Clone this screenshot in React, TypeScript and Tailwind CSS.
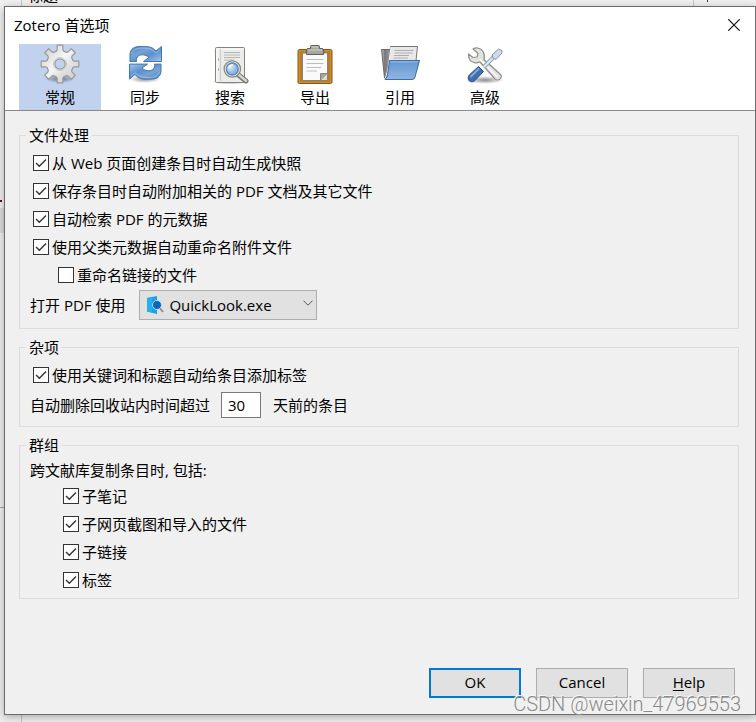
import type { ReactNode } from "react";
import { useState } from "react";

const gearPath = (() => {
  const points: string[] = [];
  const c = 20;
  for (let i = 0; i < 8; i++) {
    const base = (i * Math.PI) / 4;
    const corners: [number, number][] = [
      [-0.27, 13.4],
      [-0.2, 14.6],
      [-0.15, 19],
      [0.15, 19],
      [0.2, 14.6],
      [0.27, 13.4],
    ];
    for (const [a, r] of corners) {
      points.push(`${(c + r * Math.sin(base + a)).toFixed(2)},${(c - r * Math.cos(base + a)).toFixed(2)}`);
    }
  }
  return `M${points.join("L")}Z M25.2 20A5.2 5.2 0 1 0 14.8 20A5.2 5.2 0 1 0 25.2 20Z`;
})();

function Shadow({ cy = 36, rx = 16 }: { cy?: number; rx?: number }) {
  return (
    <>
      <radialGradient id={`shade${cy}${rx}`}>
        <stop offset="0" stopColor="#000" stopOpacity="0.45" />
        <stop offset="1" stopColor="#000" stopOpacity="0" />
      </radialGradient>
      <ellipse cx="20" cy={cy} rx={rx} ry="4" fill={`url(#shade${cy}${rx})`} />
    </>
  );
}

function GearIcon() {
  return (
    <svg viewBox="0 0 40 40" className="size-10" aria-hidden="true">
      <defs>
        <linearGradient id="gear" x1="0" y1="0" x2="1" y2="1">
          <stop offset="0.1" stopColor="#d2d2d2" />
          <stop offset="0.45" stopColor="#f6f6f6" />
          <stop offset="0.65" stopColor="#e0e0e0" />
          <stop offset="1" stopColor="#c8c8c8" />
        </linearGradient>
      </defs>
      <Shadow cy={35} rx={15} />
      <path d={gearPath} fill="url(#gear)" fillRule="evenodd" stroke="#999996" strokeWidth="1.2" strokeLinejoin="round" />
      <circle cx="20" cy="20" r="6.4" fill="none" stroke="#c4c4c4" strokeWidth="1" />
    </svg>
  );
}

function SyncIcon() {
  const arrow = "M5 17.5V10C5.5 5 9 2.5 15 2.5H21C26 2.8 29 4.5 31 7L36.5 2.5V17.5H18.5L24 13.5C21 10.5 16 10 13.5 12C11.5 13.5 11 15 11.5 17.5Z";
  return (
    <svg viewBox="0 0 40 40" className="size-10" aria-hidden="true">
      <defs>
        <linearGradient id="sync" x1="0" y1="0" x2="1" y2="1">
          <stop offset="0" stopColor="#4a80c0" />
          <stop offset="0.35" stopColor="#76a3d7" />
          <stop offset="0.6" stopColor="#5a90cd" />
          <stop offset="1" stopColor="#a5c6eb" />
        </linearGradient>
      </defs>
      <Shadow cy={35} />
      <path d={arrow} fill="url(#sync)" stroke="#4576ae" strokeLinejoin="round" />
      <path d="M6.5 10C8 5 12 4 19 4C24 4 28 6 31 9L35 5.5" fill="none" stroke="#a3c3e6" strokeWidth="0.8" />
      <g transform="rotate(180 20.5 18.8)">
        <path d={arrow} fill="url(#sync)" stroke="#4576ae" strokeLinejoin="round" />
        <path d="M6.5 10C8 5 12 4 19 4C24 4 28 6 31 9L35 5.5" fill="none" stroke="#a3c3e6" strokeWidth="0.8" />
      </g>
    </svg>
  );
}

function SearchIcon() {
  return (
    <svg viewBox="0 0 40 40" className="size-10" aria-hidden="true">
      <defs>
        <radialGradient id="lens" cx="0.35" cy="0.35">
          <stop offset="0" stopColor="#e4effa" />
          <stop offset="1" stopColor="#8eb4dd" />
        </radialGradient>
      </defs>
      <Shadow cy={37} rx={18} />
      <rect x="5.5" y="3.5" width="29" height="35" rx="1" fill="#ececea" stroke="#83837f" />
      <path d="M7 37.5V5H33.5" fill="none" stroke="#fff" />
      <path d="M10.5 5V37" stroke="#c9c9c7" />
      <path d="M14 8.5H30M14 11H30M14 13.5H30M14 16H24" stroke="#b4b4b1" />
      <path d="M8.5 14.5V16.5M8.5 24.5V26.5" stroke="#999" />
      <path d="M28.5 31L36 37" stroke="#777773" strokeWidth="5" strokeLinecap="round" />
      <path d="M29 31L36 36.8" stroke="#d4d4d0" strokeWidth="2.5" strokeLinecap="round" />
      <circle cx="22.3" cy="25" r="8.2" fill="#f0f0ee" stroke="#888884" strokeWidth="1.3" />
      <circle cx="22.3" cy="25" r="6" fill="url(#lens)" stroke="#5386bd" strokeWidth="1.3" />
      <path d="M18.5 24.5A4 4 0 0 1 23 21" fill="none" stroke="#fff" strokeWidth="1.2" />
    </svg>
  );
}

function ClipboardIcon() {
  return (
    <svg viewBox="0 0 40 40" className="size-10" aria-hidden="true">
      <Shadow cy={38} rx={20} />
      <rect x="3" y="5.5" width="34" height="34" rx="1.5" fill="#bd7b21" stroke="#855313" />
      <rect x="4.2" y="6.7" width="31.6" height="31.6" fill="none" stroke="#d69a42" strokeWidth="0.8" />
      <path d="M7.5 9H32.5V36.5H7.5Z" fill="#fafafa" stroke="#87847c" />
      <path d="M25.5 36V29.5H32V30L26 36Z" fill="#a5a59f" stroke="#85857f" />
      <path d="M26 36L32 30V36Z" fill="#dededa" />
      <path d="M11.5 15.5H28.5M11.5 19.5H28.5M11.5 23.5H26M11.5 27H22" stroke="#bdbdbd" strokeWidth="1.2" />
      <path d="M11.5 10.5V6Q11.5 4.5 13 4.5H15.5V2.5Q15.5 1.5 16.5 1.5H23.5Q24.5 1.5 24.5 2.5V4.5H27Q28.5 4.5 28.5 6V10.5Z" fill="#a5a89f" stroke="#5e6158" />
      <path d="M13 6H27M17 3H23" stroke="#d0d2c9" />
    </svg>
  );
}

function FolderIcon() {
  return (
    <svg viewBox="0 0 40 40" className="size-10" aria-hidden="true">
      <defs>
        <linearGradient id="folder" x1="0" y1="0" x2="0" y2="1">
          <stop offset="0" stopColor="#6397d2" />
          <stop offset="1" stopColor="#8fb5e2" />
        </linearGradient>
        <linearGradient id="back" x1="0" y1="0" x2="1" y2="0">
          <stop offset="0" stopColor="#d0d0d0" />
          <stop offset="0.3" stopColor="#777" />
          <stop offset="1" stopColor="#aaa" />
        </linearGradient>
      </defs>
      <path d="M1.5 5.5H10L12 8V34H4.5Z" fill="url(#back)" stroke="#686868" />
      <path d="M10.5 2.5H37.5L35 26H8Z" fill="#e8e8e8" stroke="#777" />
      <path d="M14.5 6.5H33.5M14.5 9H32.5M14 11.5H29M13.5 14H28" stroke="#acacac" />
      <path d="M11 3L8 25L5.5 34" fill="none" stroke="#fff" />
      <path d="M9.5 16.5H39.5L35 33Q34.5 35.5 32 35.5H5Q7.5 33 7.7 30Z" fill="url(#folder)" stroke="#3b6ca8" strokeLinejoin="round" />
      <path d="M10.5 17.8H37.8" stroke="#a0c1e6" />
    </svg>
  );
}

function ToolsIcon() {
  return (
    <svg viewBox="0 0 40 40" className="size-10" aria-hidden="true">
      <Shadow cy={36} rx={19} />
      <path d="M8 5L13 9.5L12 13L8 13.5L3.5 10C3 14.5 5.5 18.5 10 18.8C12 19 13.5 18.5 15 18L29.5 34.5C31 36.5 34 36.5 35.5 34.5C36.5 33 36.3 31 35 30L19 15.5C20.5 9 17 4.5 12.5 4Q10 3.8 8 5Z" fill="#e2e2e0" stroke="#8d8d89" strokeWidth="1.2" strokeLinejoin="round" />
      <path d="M15 15.5L32.5 33" stroke="#fafafa" strokeWidth="1.5" />
      <path d="M19 23L29 12.5" stroke="#8aa4bd" strokeWidth="4" />
      <path d="M19 23L29 12.5" stroke="#dce8f3" strokeWidth="2" />
      <path d="M27 11L33.5 5L37 6.5V9L31 15.5L28 14Z" fill="#cddae8" stroke="#8097ad" />
      <path d="M13.5 22.5L18.5 27.5L10 36.5C8 38.5 5 38 4 36.5C2.8 35 3 32 4.5 30.8Z" fill="#3f6fae" stroke="#24508b" strokeLinejoin="round" />
      <path d="M13.5 25L6 32.5" stroke="#86abdc" strokeWidth="1.8" strokeLinecap="round" />
    </svg>
  );
}

function QuickLookIcon() {
  return (
    <svg viewBox="0 0 18 20" className="pointer-events-none absolute top-[5px] left-2 h-5 w-[18px]" aria-hidden="true">
      <path d="M0 3L10 1V6L6 9V13L10 15V19L0 16.5Z" fill="#1ea0e6" />
      <path d="M0 3L5 2V17.7L0 16.5Z" fill="#27b0f0" />
      <path d="M11.5 11.5L16 17" stroke="#8b8b8b" strokeWidth="1.8" />
      <circle cx="10" cy="10" r="4.5" fill="#0b66bd" stroke="#d7eafa" strokeWidth="0.8" />
    </svg>
  );
}

const tabs: { name: string; icon: ReactNode }[] = [
  { name: "常规", icon: <GearIcon /> },
  { name: "同步", icon: <SyncIcon /> },
  { name: "搜索", icon: <SearchIcon /> },
  { name: "导出", icon: <ClipboardIcon /> },
  { name: "引用", icon: <FolderIcon /> },
  { name: "高级", icon: <ToolsIcon /> },
];

function Check({ label, checked = true }: { label: string; checked?: boolean }) {
  return (
    <label className="flex h-7 items-center gap-[3px]">
      <span className="grid size-4 shrink-0">
        <input
          type="checkbox"
          defaultChecked={checked}
          className="peer col-start-1 row-start-1 size-4 appearance-none border border-[#333] bg-white"
        />
        <svg
          viewBox="0 0 16 16"
          className="pointer-events-none invisible col-start-1 row-start-1 size-4 peer-checked:visible"
          aria-hidden="true"
        >
          <path d="M3 8L6.3 11.3L13 4.5" fill="none" stroke="#333" strokeWidth="1.4" />
        </svg>
      </span>
      <span>{label}</span>
    </label>
  );
}

function Group({ title, children }: { title: string; children: ReactNode }) {
  return (
    <fieldset className="min-w-0 border border-[#dcdcdc] px-2.5">
      <legend className="-ml-1 h-[22px] px-[3px] leading-[22px]">{title}</legend>
      {children}
    </fieldset>
  );
}

export default function App() {
  const [tab, setTab] = useState("常规");
  const button = "h-[30px] w-[92px] bg-[#e1e1e1] pb-0.5";

  return (
    <div className="relative flex min-h-screen flex-col overflow-hidden bg-[#f0f0f0] pt-1.5 pb-[7px] pl-1 font-['Open_Sans','Noto_Sans_CJK_SC',sans-serif] text-[15px] leading-5 text-black">
      <div className="absolute inset-y-0 left-[21px] w-px bg-[#c4c4c4]" />
      <div className="absolute top-0 left-[693px] h-2 w-px bg-[#c4c4c4]" />
      <div className="absolute -top-[15px] left-7">标题</div>
      <div className="absolute top-0 left-[707px] h-0.5 w-px bg-[#333]" />
      <div className="absolute top-[200px] left-0 h-0.5 w-0.5 bg-[#5a1515]" />
      <div className="absolute top-[208px] left-0 h-[25px] w-1 bg-[#dcdcdc]" />
      <div className="absolute top-[507px] left-0 h-px w-1 bg-[#aaa]" />

      <main className="relative flex flex-1 flex-col border border-[#6b6b6b] bg-[#f0f0f0] shadow-[0_2px_8px_rgba(0,0,0,0.3)]">
        <header className="border-b border-[#8a8a8a] bg-white">
          <div className="flex h-[37px] items-center justify-between pr-[13px] pb-0.5 pl-[9px]">
            <h1>Zotero 首选项</h1>
            <button type="button" aria-label="Close" className="grid size-4 place-items-center">
              <svg viewBox="0 0 12 12" className="size-3" aria-hidden="true">
                <path d="M0.3 0.3L11.7 11.7M11.7 0.3L0.3 11.7" stroke="#111" strokeWidth="1.2" />
              </svg>
            </button>
          </div>
          <nav className="flex gap-[3px] pl-3.5">
            {tabs.map((item) => (
              <button
                key={item.name}
                type="button"
                onClick={() => setTab(item.name)}
                className={
                  item.name === tab
                    ? "flex h-[66px] w-[82px] flex-col items-center gap-[3px] bg-[#c1d2ee]"
                    : "flex h-[66px] w-[82px] flex-col items-center gap-[3px]"
                }
              >
                {item.icon}
                <span>{item.name}</span>
              </button>
            ))}
          </nav>
        </header>

        <div className="flex flex-col gap-[7px] pt-[13px] pr-4 pb-6 pl-3.5">
          <Group title="文件处理">
            <div className="pt-[3px] pl-[3px]">
              <Check label="从 Web 页面创建条目时自动生成快照" />
              <Check label="保存条目时自动附加相关的 PDF 文档及其它文件" />
              <Check label="自动检索 PDF 的元数据" />
              <Check label="使用父类元数据自动重命名附件文件" />
              <div className="pl-[25px]">
                <Check label="重命名链接的文件" checked={false} />
              </div>
            </div>
            <div className="flex items-center gap-3.5 pt-px pb-2">
              <label htmlFor="pdf-app">打开 PDF 使用</label>
              <div className="relative">
                <select
                  id="pdf-app"
                  className="block h-[30px] w-[178px] appearance-none border border-[#adadad] bg-[#e1e1e1] pl-[29px]"
                >
                  <option>QuickLook.exe</option>
                </select>
                <QuickLookIcon />
                <svg
                  viewBox="0 0 10 6"
                  className="pointer-events-none absolute top-2.5 right-1 h-1.5 w-2.5"
                  aria-hidden="true"
                >
                  <path d="M0.5 0.7L5 5.2L9.5 0.7" fill="none" stroke="#555" />
                </svg>
              </div>
            </div>
          </Group>

          <Group title="杂项">
            <div className="pt-[3px] pl-[3px]">
              <Check label="使用关键词和标题自动给条目添加标签" />
            </div>
            <div className="flex items-center pt-[3px] pb-2">
              <label htmlFor="trash-days">自动删除回收站内时间超过</label>
              <input
                id="trash-days"
                type="text"
                defaultValue="30"
                className="mr-3 ml-[11px] h-[26px] w-10 border border-[#7a7a7a] bg-white pl-1.5"
              />
              <span>天前的条目</span>
            </div>
          </Group>

          <Group title="群组">
            <p className="pt-1 pb-0.5">跨文献库复制条目时, 包括:</p>
            <div className="pb-1 pl-[33px]">
              <Check label="子笔记" />
              <Check label="子网页截图和导入的文件" />
              <Check label="子链接" />
              <Check label="标签" />
            </div>
          </Group>
        </div>

        <footer className="mt-auto flex justify-end gap-[15px] pr-5 pb-4">
          <button type="button" className={`${button} border-2 border-[#0078d7]`}>
            OK
          </button>
          <button type="button" className={`${button} border border-[#adadad]`}>
            Cancel
          </button>
          <button type="button" className={`${button} border border-[#adadad]`}>
            <span className="underline underline-offset-2">H</span>elp
          </button>
        </footer>
      </main>

      <div className="pointer-events-none absolute right-[15px] bottom-1.5 font-['Roboto','Liberation_Sans',sans-serif] text-[20px] leading-6 font-light text-[#8a8a8a] [text-shadow:-1px_-1px_0_#f8f8f8]">
        CSDN @weixin_47969553
      </div>
    </div>
  );
}
